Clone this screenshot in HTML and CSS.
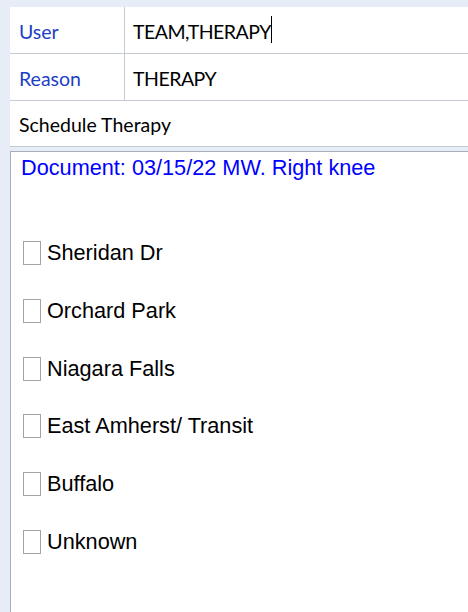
FILE: index.html
```html
<!DOCTYPE html>
<html>
<head>
<meta charset="utf-8">
<link rel="stylesheet" href="styles.css">
</head>
<body>
<div class="panel">
  <div class="row">
    <div class="label">User</div>
    <div class="value">TEAM,THERAPY<span class="caret"></span></div>
  </div>
  <div class="row">
    <div class="label">Reason</div>
    <div class="value">THERAPY</div>
  </div>
  <div class="row row-full">
    <div class="full">Schedule Therapy</div>
  </div>
</div>
<div class="doc">
  <div class="doc-title">Document: 03/15/22 MW. Right knee</div>
  <div class="options">
    <label class="opt"><span class="box"></span><span class="opt-text">Sheridan Dr</span></label>
    <label class="opt"><span class="box"></span><span class="opt-text">Orchard Park</span></label>
    <label class="opt"><span class="box"></span><span class="opt-text">Niagara Falls</span></label>
    <label class="opt"><span class="box"></span><span class="opt-text">East Amherst/ Transit</span></label>
    <label class="opt"><span class="box"></span><span class="opt-text">Buffalo</span></label>
    <label class="opt"><span class="box"></span><span class="opt-text">Unknown</span></label>
  </div>
</div>
</body>
</html>
```
FILE: styles.css
```css
html, body {
  margin: 0;
  padding: 0;
  background: #e6edf7;
  height: 100%;
  overflow: hidden;
}
body {
  padding: 7px 0 0 10px;
  box-sizing: border-box;
  display: flex;
  flex-direction: column;
}
.panel {
  background: #ffffff;
  font-family: Lato, "Noto Sans", sans-serif;
  font-size: 19.5px;
  color: #000;
}
.row {
  display: flex;
  height: 46px;
  border-bottom: 1px solid #c5cad3;
}
.row-full {
  height: 45px;
}
.label {
  width: 115px;
  border-right: 1px solid #c5cad3;
  color: #1d3fc6;
  padding: 4px 0 0 9px;
  box-sizing: border-box;
  line-height: 42px;
}
.value {
  padding: 4px 0 0 8px;
  line-height: 42px;
  display: flex;
  align-items: center;
  letter-spacing: -0.5px;
}
.full {
  padding: 4px 0 0 9px;
  line-height: 40px;
}
.caret {
  display: inline-block;
  width: 1px;
  height: 27px;
  background: #000;
  margin: -6px 0 0 0;
}
.doc {
  flex: 1;
  margin-top: 4px;
  background: #fff;
  border-top: 1px solid #a7aeb9;
  border-left: 1px solid #a7aeb9;
  font-family: "Liberation Sans", Arial, sans-serif;
  font-size: 21.7px;
}
.doc-title {
  color: #0000ff;
  padding: 4px 0 0 10px;
  line-height: 24px;
}
.options {
  display: flex;
  flex-direction: column;
  gap: 33.8px;
  margin-top: 61px;
  padding-left: 12px;
}
.opt {
  display: flex;
  align-items: center;
  height: 24px;
}
.box {
  width: 18px;
  height: 24px;
  border: 1px solid #a3a3a3;
  box-sizing: border-box;
  background: #fff;
}
.opt-text {
  margin-left: 6px;
  line-height: 24px;
  color: #000;
}
```
